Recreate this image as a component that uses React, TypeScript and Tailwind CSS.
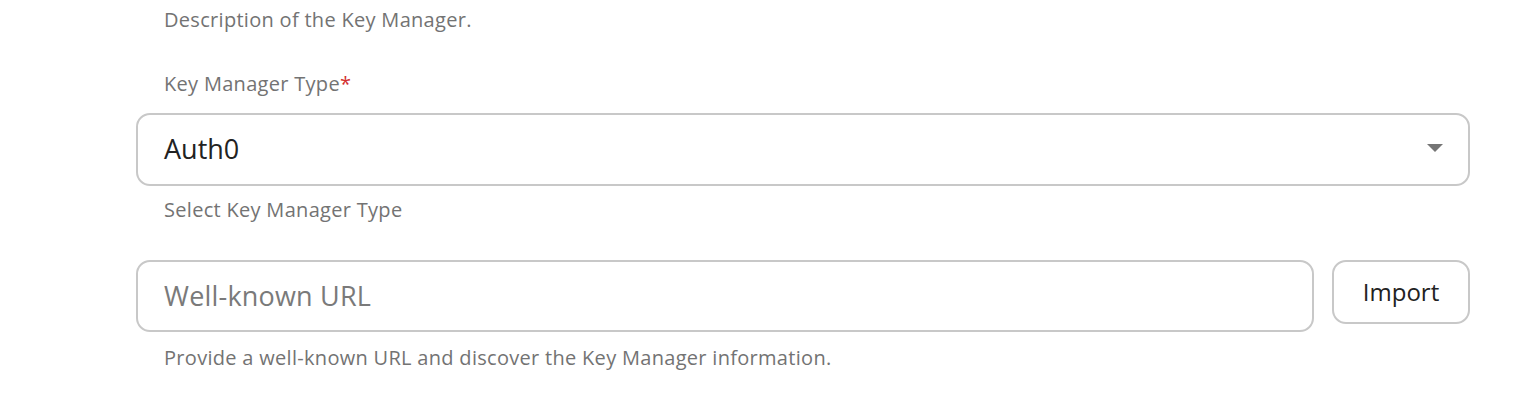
export default function App() {
  return (
    <div className="w-[1514px] h-[396px] bg-white pl-[136px] pr-[44px] font-['Open_Sans',sans-serif] overflow-hidden">
      <p className="mt-[6px] pl-[28px] text-[20px] leading-[28px] tracking-[0.3px] text-[#737373]">Description of the Key Manager.</p>
      <p className="mt-[36px] pl-[28px] text-[20px] leading-[28px] tracking-[0.3px] text-[#737373]">
        Key Manager Type<span className="text-[#d32f2f]">*</span>
      </p>
      <div className="mt-[15px] h-[73px] rounded-[14px] border-2 border-[#c8c8c8] flex items-center justify-between pl-[26px] pr-[24px]">
        <span className="text-[27px] text-[#222222]">Auth0</span>
        <svg width="18" height="10" viewBox="0 0 18 10" className="mb-[4px]">
          <path d="M1 1 L17 1 L9 9 Z" fill="#757575" />
        </svg>
      </div>
      <p className="mt-[10px] pl-[28px] text-[20px] leading-[28px] tracking-[0.3px] text-[#737373]">Select Key Manager Type</p>
      <div className="mt-[36px] flex items-start gap-[18px]">
        <div className="flex-1 h-[72px] rounded-[14px] border-2 border-[#c8c8c8] flex items-center pl-[26px]">
          <span className="text-[27px] tracking-[0.2px] text-[#7a7a7a]">Well-known URL</span>
        </div>
        <button className="w-[138px] h-[64px] rounded-[14px] border-2 border-[#c8c8c8] text-[24px] text-[#222222] flex items-center justify-center">
          Import
        </button>
      </div>
      <p className="mt-[12px] pl-[28px] text-[20px] leading-[28px] tracking-[0.3px] text-[#737373]">
        Provide a well-known URL and discover the Key Manager information.
      </p>
    </div>
  );
}
